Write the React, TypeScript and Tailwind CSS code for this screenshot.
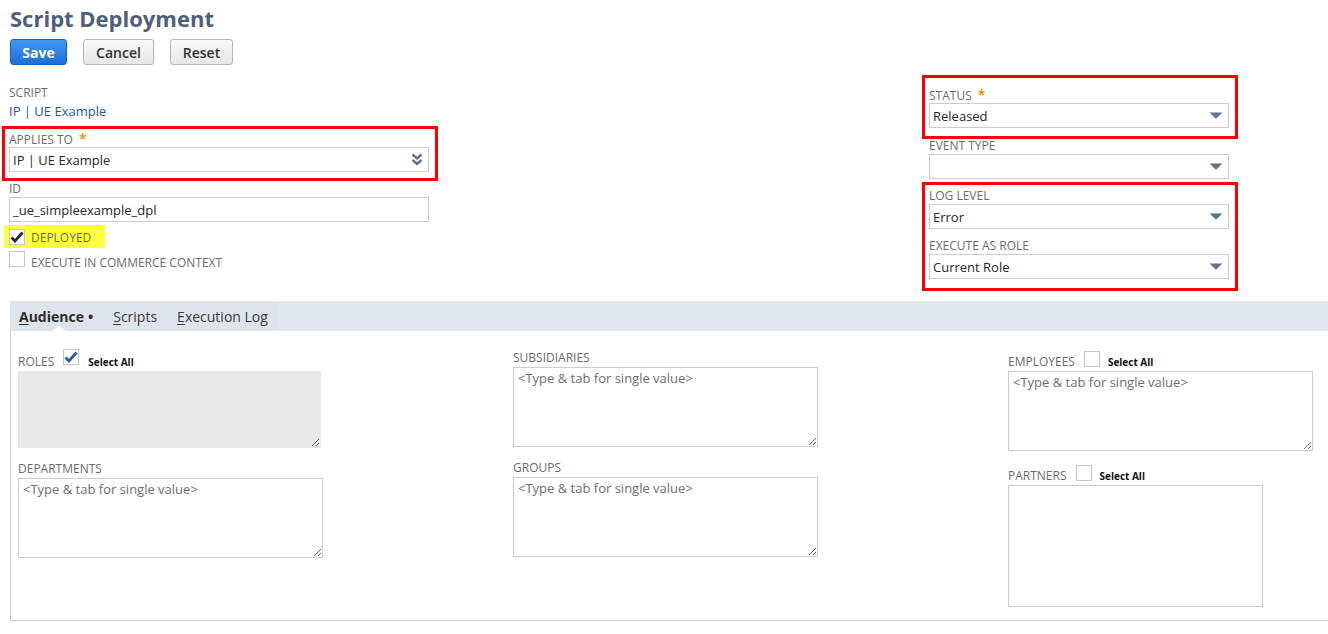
import React from "react";

function Label({ children, req }: { children: React.ReactNode; req?: boolean }) {
  return (
    <div className="h-[16px] text-[12px] leading-[16px] text-[#6b6b6b] uppercase whitespace-nowrap">
      {children}
      {req && <span className="ml-[6px] text-[#e39a17] text-[14px] font-bold">*</span>}
    </div>
  );
}

function Triangle() {
  return (
    <svg width="14" height="7" viewBox="0 0 14 7">
      <path d="M0.5 0.5h13L7.6 6.3a0.8 0.8 0 0 1-1.2 0z" fill="#5d7392" />
    </svg>
  );
}

function DoubleChevron() {
  return (
    <svg width="12" height="13" viewBox="0 0 12 13">
      <path d="M1.5 1.5l4.5 4 4.5-4" fill="none" stroke="#5d7392" strokeWidth="2.4" />
      <path d="M1.5 7l4.5 4 4.5-4" fill="none" stroke="#5d7392" strokeWidth="2.4" />
    </svg>
  );
}

function Select({ value, w, dbl }: { value?: string; w: string; dbl?: boolean }) {
  return (
    <div
      className={`${w} h-[25px] border border-[#cccccc] bg-white flex items-center justify-between pl-[3px] pr-[5px] text-[13px] text-[#262626]`}
    >
      <span className="pt-[2px]">{value}</span>
      {dbl ? <DoubleChevron /> : <Triangle />}
    </div>
  );
}

function Check({ checked, dark }: { checked?: boolean; dark?: boolean }) {
  return (
    <div className="w-[16px] h-[16px] border border-[#c4c4c4] bg-white flex items-center justify-center shrink-0">
      {checked && (
        <svg width="14" height="12" viewBox="0 0 14 12">
          <path
            d="M1.5 6.5l3.5 3.5 7.5-8.5"
            fill="none"
            stroke={dark ? "#2b2b2b" : "#2d5a9c"}
            strokeWidth="2.8"
          />
        </svg>
      )}
    </div>
  );
}

function TA({ w, h, placeholder, grey, noResize }: { w: string; h: string; placeholder?: string; grey?: boolean; noResize?: boolean }) {
  return (
    <textarea
      readOnly
      placeholder={placeholder}
      className={`${w} ${h} block border ${grey ? "border-[#e8e8e8] bg-[#e8e8e8]" : "border-[#cccccc] bg-white"} ${
        noResize ? "resize-none" : ""
      } px-[4px] py-[1px] text-[13px] leading-[18px] text-[#666] placeholder:text-[#6e6e6e] outline-none`}
    />
  );
}

export default function App() {
  return (
    <div className="w-[1328px] h-[634px] overflow-hidden bg-white font-['Open_Sans',sans-serif] text-[#333]">
      <h1 className="pl-[10px] pt-[4px] text-[22px] font-bold leading-[28px] text-[#4d5f79]">Script Deployment</h1>
      <div className="flex gap-[16px] pl-[10px] mt-[7px]">
        <button className="w-[57px] h-[26px] rounded-[3px] border border-[#1463c4] bg-gradient-to-b from-[#4096f5] to-[#1c6fd8] text-white text-[14px] font-bold">
          Save
        </button>
        <button className="w-[71px] h-[26px] rounded-[3px] border border-[#b5b5b5] bg-gradient-to-b from-[#fafafa] to-[#e6e6e6] text-[#333] text-[14px] font-semibold">
          Cancel
        </button>
        <button className="w-[63px] h-[26px] rounded-[3px] border border-[#b5b5b5] bg-gradient-to-b from-[#fafafa] to-[#e6e6e6] text-[#333] text-[14px] font-semibold">
          Reset
        </button>
      </div>

      <div className="flex items-start">
        {/* left column */}
        <div className="w-[922px] pl-[2px] pt-[20px]">
          <div className="pl-[7px]">
            <Label>Script</Label>
            <div className="mt-[2px] h-[16px] text-[13px] leading-[16px] text-[#255599]">IP | UE Example</div>
          </div>
          <div className="mt-[7px] w-[436px] border-[3px] border-[#ff0000] pl-[4px] pt-[2px] pb-[6px]">
            <Label req>Applies To</Label>
            <Select value="IP | UE Example" w="w-[420px]" dbl />
          </div>
          <div className="pl-[7px]">
            <Label>ID</Label>
            <div className="w-[420px] h-[25px] border border-[#cccccc] flex items-center pl-[3px] pt-[2px] text-[13px] text-[#262626]">
              _ue_simpleexample_dpl
            </div>
          </div>
          <div className="mt-[3px] ml-[2px] w-[101px] h-[23px] bg-[#ffff3c] flex items-center pl-[5px]">
            <Check checked dark />
            <span className="ml-[6px] mt-[3px] text-[12px] text-[#6b6b6b]">DEPLOYED</span>
          </div>
          <div className="mt-[3px] pl-[7px] flex items-center h-[16px]">
            <Check />
            <span className="ml-[6px] mt-[8px] text-[12px] text-[#6b6b6b]">EXECUTE IN COMMERCE CONTEXT</span>
          </div>
        </div>

        {/* right column */}
        <div className="pt-[10px]">
          <div className="w-[316px] border-[3px] border-[#ff0000] pl-[4px] pt-[9px] pb-[8px]">
            <Label req>Status</Label>
            <Select value="Released" w="w-[300px]" />
          </div>
          <div className="pl-[7px]">
            <div className="h-[15px] -mt-[1px] mb-[1px]">
              <Label>Event Type</Label>
            </div>
            <Select w="w-[300px]" />
          </div>
          <div className="mt-[3px] w-[316px] border-[3px] border-[#ff0000] pl-[4px] pt-[3px] pb-[9px]">
            <Label>Log Level</Label>
            <Select value="Error" w="w-[300px]" />
            <div className="mt-[9px]">
              <Label>Execute as Role</Label>
            </div>
            <Select value="Current Role" w="w-[300px]" />
          </div>
        </div>
      </div>

      {/* tabs */}
      <div className="mt-[10px] ml-[10px] h-[30px] flex bg-[#e1e6ef]">
        <div className="relative flex items-center h-full w-[268px] bg-[#dfe3ea] pl-[9px] text-[14px] text-[#3a3a3a]">
          <span className="font-bold text-[#2f2f2f]">
            <span className="underline underline-offset-2">A</span>udience
            <span className="ml-[4px]">•</span>
          </span>
          <span className="ml-[20px]">
            <span className="underline underline-offset-2">S</span>cripts
          </span>
          <span className="ml-[20px]">
            <span className="underline underline-offset-2">E</span>xecution Log
          </span>
          <div className="absolute left-[42px] bottom-0 w-0 h-0 border-l-[7px] border-r-[7px] border-b-[5px] border-l-transparent border-r-transparent border-b-white" />
        </div>
      </div>

      {/* panel */}
      <div className="ml-[10px] h-[290px] border-l border-b border-[#cccccc] grid grid-cols-[495px_495px_330px] pl-[7px]">
        <div className="pt-[18px]">
          <div className="flex items-end h-[22px]">
            <span className="mb-[1px] text-[12px] leading-[16px] text-[#6b6b6b]">ROLES</span>
            <div className="ml-[9px] mb-[6px]">
              <Check checked />
            </div>
            <span className="ml-[9px] mb-[1px] text-[10px] font-bold text-[#111]">Select All</span>
          </div>
          <TA w="w-[303px]" h="h-[77px]" grey />
          <div className="mt-[13px]">
            <Label>Departments</Label>
          </div>
          <div className="mt-[1px]">
            <TA w="w-[305px]" h="h-[80px]" placeholder="<Type & tab for single value>" />
          </div>
        </div>
        <div className="pt-[19px]">
          <Label>Subsidiaries</Label>
          <div className="mt-[1px]">
            <TA w="w-[305px]" h="h-[80px]" placeholder="<Type & tab for single value>" />
          </div>
          <div className="mt-[13px]">
            <Label>Groups</Label>
          </div>
          <div className="mt-[1px]">
            <TA w="w-[305px]" h="h-[80px]" placeholder="<Type & tab for single value>" />
          </div>
        </div>
        <div className="pt-[19px]">
          <div className="flex items-end h-[21px]">
            <span className="mb-[1px] text-[12px] leading-[16px] text-[#6b6b6b]">EMPLOYEES</span>
            <div className="ml-[9px] mb-[4px]">
              <Check />
            </div>
            <span className="ml-[8px] mb-[1px] text-[10px] font-bold text-[#111]">Select All</span>
          </div>
          <TA w="w-[305px]" h="h-[80px]" placeholder="<Type & tab for single value>" />
          <div className="mt-[13px] flex items-end h-[21px]">
            <span className="mb-[1px] text-[12px] leading-[16px] text-[#6b6b6b]">PARTNERS</span>
            <div className="ml-[9px] mb-[4px]">
              <Check />
            </div>
            <span className="ml-[8px] mb-[1px] text-[10px] font-bold text-[#111]">Select All</span>
          </div>
          <TA w="w-[255px]" h="h-[122px]" noResize />
        </div>
      </div>
    </div>
  );
}
